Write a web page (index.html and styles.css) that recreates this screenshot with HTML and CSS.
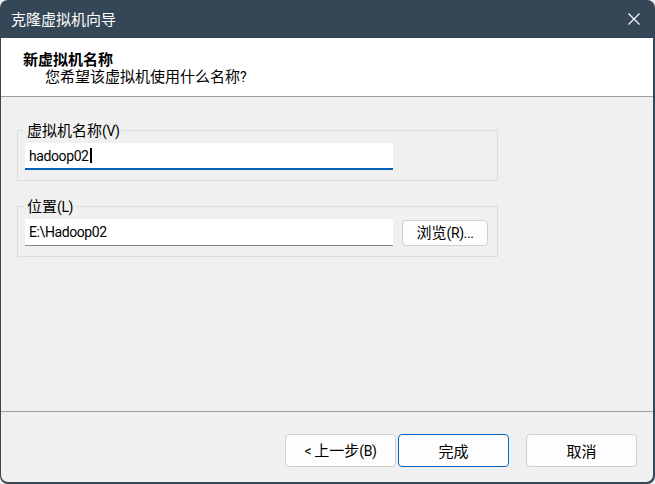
FILE: index.html
```html
<!DOCTYPE html>
<html lang="zh-CN">
<head>
<meta charset="utf-8">
<title>克隆虚拟机向导</title>
<link rel="stylesheet" href="styles.css">
</head>
<body>
<div class="window">
  <div class="titlebar">
    <span class="title">克隆虚拟机向导</span>
    <svg class="close" width="12" height="12" viewBox="0 0 12 12" aria-label="关闭"><path d="M0.5 0.5 L11.5 11.5 M11.5 0.5 L0.5 11.5" stroke="#ffffff" stroke-width="1.1" fill="none"/></svg>
  </div>
  <div class="client">
    <div class="header">
      <div class="h-title">新虚拟机名称</div>
      <div class="h-sub">您希望该虚拟机使用什么名称<span class="en">?</span></div>
    </div>
    <div class="body">
      <fieldset class="group">
        <legend>虚拟机名称<span class="en">(V)</span></legend>
        <div class="row">
          <div class="field focused" role="textbox"><span class="en">hadoop02</span><span class="caret"></span></div>
        </div>
      </fieldset>
      <fieldset class="group">
        <legend>位置<span class="en">(L)</span></legend>
        <div class="row">
          <div class="field" role="textbox"><span class="en">E:\Hadoop02</span></div>
          <button class="btn browse">浏览<span class="en">(R)...</span></button>
        </div>
      </fieldset>
    </div>
    <div class="footer">
      <button class="btn"><span class="en">&lt; </span>上一步<span class="en">(B)</span></button>
      <button class="btn primary">完成</button>
      <button class="btn cancel">取消</button>
    </div>
  </div>
</div>
</body>
</html>
```

FILE: styles.css
```css
* { box-sizing: border-box; }
html, body { margin: 0; }
body {
  background: #eeeeee;
  font-family: "Noto Sans CJK SC", sans-serif;
  font-size: 15px;
  color: #000;
}
.en {
  font-family: Roboto, "Noto Sans", sans-serif;
  font-size: 14px;
  letter-spacing: -0.4px;
}
.window {
  width: 655px;
  height: 484px;
  background: #354757;
  padding: 0 2px 2px 1px;
  border-radius: 8px;
  display: flex;
  flex-direction: column;
}
.titlebar {
  height: 38px;
  flex: none;
  display: flex;
  align-items: center;
  justify-content: space-between;
  padding: 0 13px 0 10px;
  color: #fff;
  line-height: 20px;
}
.close { display: block; }
.client {
  flex: 1;
  display: flex;
  flex-direction: column;
  background: #f0f0f0;
  border-radius: 0 0 7px 7px;
  overflow: hidden;
}
.header {
  height: 59px;
  flex: none;
  background: #fff;
  border-bottom: 1px solid #a0a0a0;
  padding: 12px 0 0 22px;
  line-height: 17px;
}
.h-title { font-weight: 700; }
.h-sub { padding-left: 22px; }
.body {
  flex: 1;
  padding: 24px 0 0 16px;
}
.group {
  width: 481px;
  margin: 0;
  padding: 3px 7px 10px 7px;
  border: 1px solid #dcdcdc;
}
.group + .group { margin-top: 16px; }
legend {
  margin-left: -2px;
  padding: 0 3px 0 4px;
  line-height: 17px;
}
.row {
  display: flex;
  align-items: center;
  gap: 9px;
}
.field {
  width: 368px;
  height: 27px;
  background: #fff;
  border-bottom: 1px solid #868686;
  border-radius: 2px 2px 0 0;
  padding: 0 4px;
  display: flex;
  align-items: center;
  line-height: 20px;
}
.field.focused { border-bottom: 2px solid #005fb8; }
.caret {
  width: 2px;
  height: 15px;
  background: #000;
  margin-left: 1px;
}
.btn {
  font: inherit;
  height: 33px;
  width: 111px;
  background: #fdfdfd;
  border: 1px solid #d0d0d0;
  border-radius: 4px;
  color: #000;
  padding: 0;
  line-height: 20px;
}
.btn.primary { border-color: #0067c0; }
.browse {
  width: 86px;
  height: 26px;
}
.footer {
  flex: none;
  border-top: 1px solid #a0a0a0;
  padding: 22px 16px 15px 0;
  display: flex;
  justify-content: flex-end;
  gap: 2px;
}
.btn.cancel { margin-left: 15px; }
```
